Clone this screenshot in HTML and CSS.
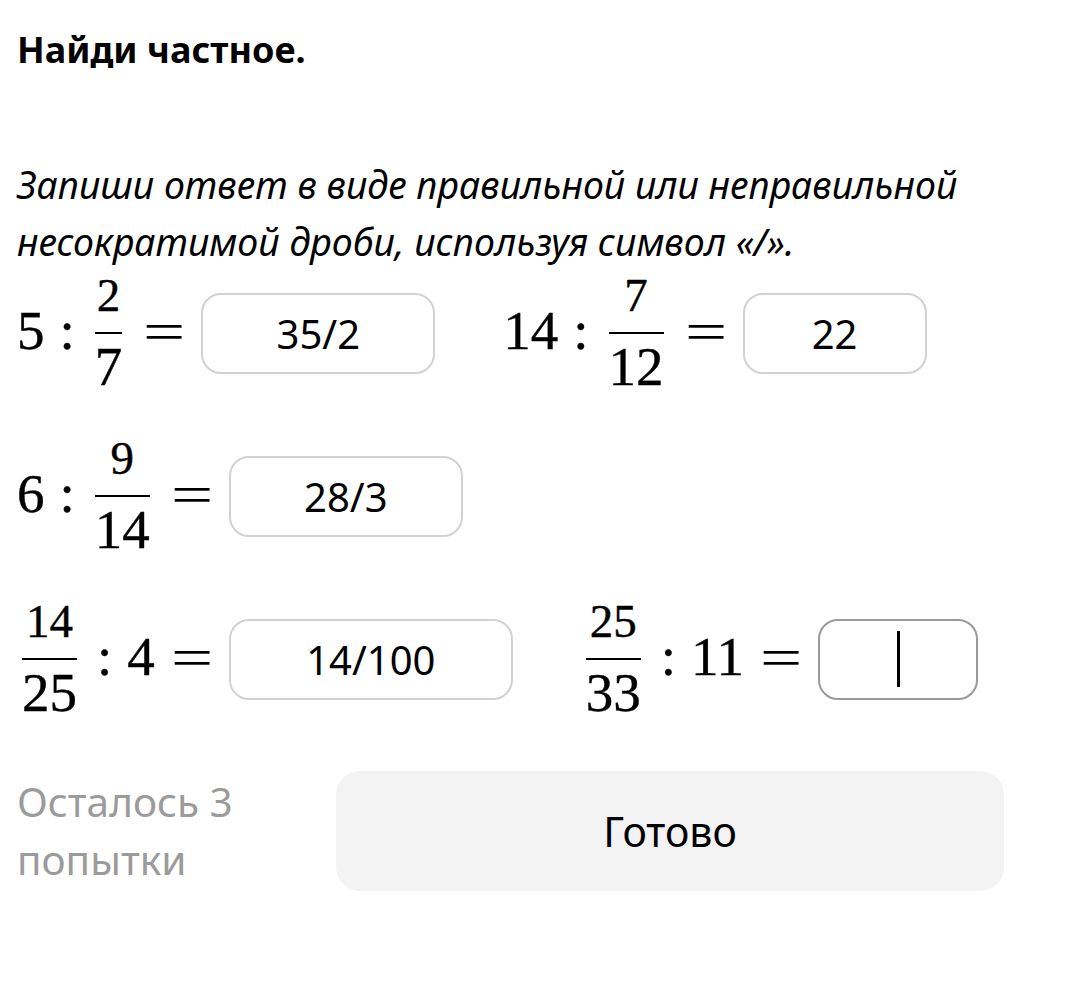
FILE: index.html
```html
<!DOCTYPE html>
<html lang="ru">
<head>
<meta charset="utf-8">
<title>Найди частное</title>
<link rel="stylesheet" href="styles.css">
</head>
<body>
<main class="page">
  <h1 class="title">Найди частное.</h1>
  <p class="hint">Запиши ответ в виде правильной или неправильной несократимой дроби, используя символ «/».</p>

  <div class="rows">
    <div class="row">
      <div class="eq">
        <span class="mn">5</span><span class="colon">:</span>
        <span class="frac"><span class="num">2</span><span class="bar"></span><span class="den">7</span></span>
        <span class="rel">=</span>
        <div class="box w234">35/2</div>
      </div>
      <div class="eq">
        <span class="mn">14</span><span class="colon">:</span>
        <span class="frac"><span class="num">7</span><span class="bar"></span><span class="den">12</span></span>
        <span class="rel">=</span>
        <div class="box w184">22</div>
      </div>
    </div>

    <div class="row">
      <div class="eq">
        <span class="mn">6</span><span class="colon">:</span>
        <span class="frac"><span class="num">9</span><span class="bar"></span><span class="den">14</span></span>
        <span class="rel">=</span>
        <div class="box w234">28/3</div>
      </div>
    </div>

    <div class="row">
      <div class="eq">
        <span class="frac"><span class="num">14</span><span class="bar"></span><span class="den">25</span></span>
        <span class="colon">:</span><span class="mn">4</span>
        <span class="rel">=</span>
        <div class="box w284">14/100</div>
      </div>
      <div class="eq">
        <span class="frac"><span class="num">25</span><span class="bar"></span><span class="den">33</span></span>
        <span class="colon">:</span><span class="mn">11</span>
        <span class="rel">=</span>
        <div class="box w159 focused"><span class="caret"></span></div>
      </div>
    </div>
  </div>

  <div class="footer">
    <div class="attempts">Осталось 3 попытки</div>
    <button class="done" type="button">Готово</button>
  </div>
</main>
</body>
</html>
```

FILE: styles.css
```css
html, body {
  margin: 0;
  padding: 0;
  background: #ffffff;
}

body {
  font-family: "Noto Sans", "Open Sans", sans-serif;
  color: #000000;
}

.page {
  padding: 0 17px;
}

.title {
  margin: 25px 0 0 0;
  font-size: 36px;
  line-height: 50px;
  font-weight: 700;
}

.hint {
  margin: 81px 0 0 0;
  font-size: 37.5px;
  line-height: 57px;
  font-style: italic;
  max-width: 1000px;
}

.rows {
  display: flex;
  flex-direction: column;
  gap: 37px;
}

.row {
  display: flex;
  align-items: center;
  gap: 68px;
}

.eq {
  display: flex;
  align-items: center;
  font-family: "Liberation Serif", "Times New Roman", serif;
  -webkit-text-stroke: 0.4px #000000;
}

.mn {
  font-size: 55px;
  line-height: 54px;
  margin-bottom: 4px;
}

.colon {
  font-size: 55px;
  line-height: 54px;
  margin: 0 15px 4px 15px;
}

.rel {
  display: inline-block;
  width: 46px;
  text-align: center;
  font-size: 55px;
  line-height: 54px;
  margin: 0 14px 3px 14px;
  transform: scaleX(1.36);
  -webkit-text-stroke: 0;
}

.frac {
  display: flex;
  flex-direction: column;
  align-items: stretch;
  padding: 0 5px;
  font-size: 55px;
  line-height: 40px;
  text-align: center;
}

.num {
  font-size: 47px;
  line-height: 51px;
  padding-bottom: 11px;
}

.bar {
  height: 2px;
  background: #000000;
}

.den {
  padding-top: 13px;
  padding-bottom: 9px;
}

.box {
  box-sizing: border-box;
  height: 81px;
  border: 2px solid #d2d2d2;
  border-radius: 20px;
  display: flex;
  align-items: center;
  justify-content: center;
  font-family: "Noto Sans", "Open Sans", sans-serif;
  font-size: 40px;
  color: #000000;
  -webkit-text-stroke: 0;
}

.w234 { width: 234px; }
.w184 { width: 184px; }
.w284 { width: 284px; }
.w159 { width: 160px; }

.box.focused {
  border-color: #9a9a9a;
}

.caret {
  display: block;
  width: 3px;
  height: 56px;
  background: #000000;
}

.footer {
  display: flex;
  align-items: center;
  gap: 20px;
  margin-top: 49px;
}

.attempts {
  width: 299px;
  font-size: 40.5px;
  line-height: 58px;
  color: #9b9b9b;
}

.done {
  width: 668px;
  height: 120px;
  border: none;
  border-radius: 24px;
  background: #f3f3f3;
  font-family: "Noto Sans", "Open Sans", sans-serif;
  font-size: 41px;
  color: #000000;
  padding: 0;
}
```
